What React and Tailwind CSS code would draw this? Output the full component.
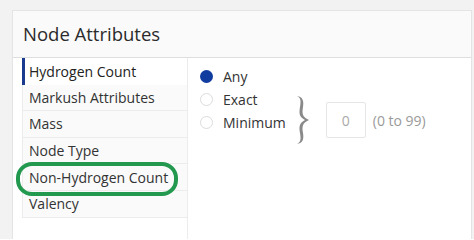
import React from 'react'

const items = ['Hydrogen Count', 'Markush Attributes', 'Mass', 'Node Type', 'Non-Hydrogen Count', 'Valency']

const Radio = ({checked, label}) => (
    <div className="flex items-center h-[23px]">
        {checked ? (
            <span className="w-[13px] h-[13px] rounded-full bg-[#0f3c9e]"></span>
        ) : (
            <span className="w-[13px] h-[13px] rounded-full border border-[#dcdcdc] bg-white"></span>
        )}
        <span className="pl-[10px] text-[14px] text-[#333]">{label}</span>
    </div>
)

const App = () => {
    return (
        <div className="relative w-[474px] h-[239px] overflow-hidden bg-[#f2f2f2] pl-3 pt-[10px]" style={{fontFamily: '"Open Sans", sans-serif'}}>
            <div className="h-[240px] w-[460px] bg-white border-l border-t border-r border-[#e4e4e4]">
                {/* header */}
                <div className="h-[47px] bg-[#fafafa] border-b border-[#dedede] flex items-center pl-[10px]">
                    <h2 className="text-[18.5px] text-[#2b2b2b] leading-none">Node Attributes</h2>
                </div>

                <div className="flex pl-[9px]">
                    {/* side list */}
                    <div className="w-[166px] h-[190px] border-r border-[#ececec]">
                        {items.map((name, i) => (
                            <div key={name}
                                className={i === 0
                                    ? 'h-[26.6px] flex items-center pl-[4px] border-l-[3px] border-[#1a3a8f] bg-white text-[14px] text-[#222]'
                                    : 'h-[26.6px] flex items-center pl-[6px] border-l border-b border-[#ececec] bg-[#fafafa] text-[14px] text-[#333]'}>
                                {name}
                            </div>
                        ))}
                    </div>

                    {/* options */}
                    <div className="flex items-start pl-[12px] pt-[7px]">
                        <div className="flex flex-col">
                            <Radio checked label="Any" />
                            <Radio label="Exact" />
                            <Radio label="Minimum" />
                        </div>
                        <div className="flex items-center mt-[30px] ml-[9px]">
                            <svg width="16" height="50" viewBox="0 0 16 50" className="text-[#8a8a8a]">
                                <path d="M2 1 C8 2 9 6 8 12 C7 18 7 22 14 25 C7 28 7 32 8 38 C9 44 8 48 2 49 C6 47 6 44 5 38 C4 32 4 28 10 25 C4 22 4 18 5 12 C6 6 6 3 2 1 Z" fill="currentColor" />
                            </svg>
                            <div className="ml-[15px] w-[40px] h-[36px] border border-[#e6e6e6] rounded-[2px] flex items-center justify-center text-[14px] text-[#aaa]">0</div>
                            <span className="ml-[7px] text-[14px] text-[#9a9a9a]">(0 to 99)</span>
                        </div>
                    </div>
                </div>
            </div>

            {/* callout ring */}
            <div className="absolute left-[16px] top-[162px] w-[162px] h-[34px] rounded-[16px] border-[4px] border-[#23984f]"></div>
        </div>
    )
}

export default App
